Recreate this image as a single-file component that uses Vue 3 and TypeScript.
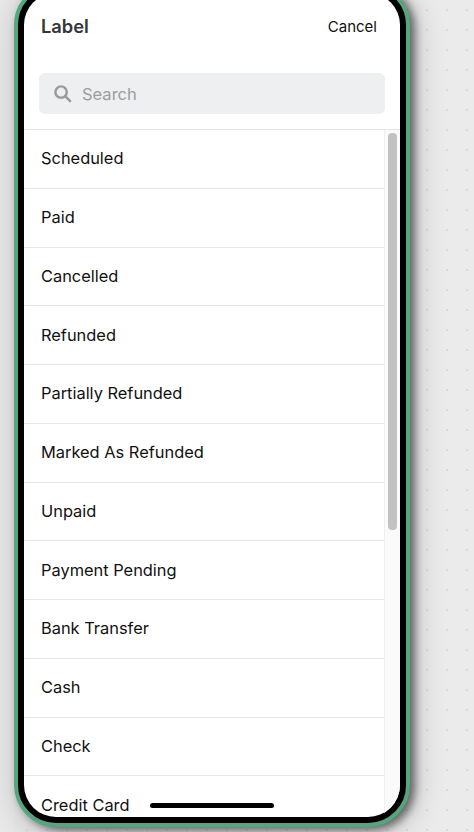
<script setup lang="ts">
const items: string[] = [
  'Scheduled', 'Paid', 'Cancelled', 'Refunded', 'Partially Refunded', 'Marked As Refunded',
  'Unpaid', 'Payment Pending', 'Bank Transfer', 'Cash', 'Check', 'Credit Card',
]
</script>

<template>
  <div class="stage">
    <div class="phone">
      <div class="screen">
        <header class="head">
          <span class="title">Label</span>
          <span class="cancel">Cancel</span>
        </header>
        <div class="search">
          <svg class="glass" viewBox="0 0 20 20" width="19" height="19" fill="none" stroke="#9a9b9e" stroke-width="2.6" stroke-linecap="round">
            <circle cx="8.5" cy="8.5" r="6" />
            <path d="M13 13l5 5" />
          </svg>
          <span class="placeholder">Search</span>
        </div>
        <div class="body">
          <ul class="list">
            <li v-for="item in items" :key="item" class="row">{{ item }}</li>
          </ul>
          <div class="gutter">
            <div class="thumb"></div>
          </div>
        </div>
        <div class="home"></div>
      </div>
    </div>
  </div>
</template>

<style>
html, body { margin: 0; padding: 0; }
</style>

<style scoped>
.stage {
  width: 474px;
  height: 832px;
  overflow: hidden;
  font-family: Inter, "Liberation Sans", sans-serif;
  background-color: #e8e8e8;
  background-image:
    linear-gradient(90deg, #e8e8e8 0, #e8e8e8 14px, transparent 14px),
    radial-gradient(circle at center, #dadada 0, #dadada 1px, transparent 1.4px),
    linear-gradient(90deg, #e6e6e6 0%, #ebebeb 100%);
  background-size: 100% 100%, 20px 20px, 100% 100%;
  background-position: 0 0, -3px 0, 0 0;
}
.phone {
  box-sizing: border-box;
  width: 396px;
  height: 844px;
  margin: -17px 0 0 14px;
  border: 4px solid #55a57f;
  border-radius: 42px;
  background: #000;
  box-shadow: 5px 3px 8px rgba(0, 0, 0, 0.5), 4px 4px 30px rgba(0, 0, 0, 0.22);
}
.screen {
  position: relative;
  box-sizing: border-box;
  width: 376px;
  height: 824px;
  margin: 6px;
  border-radius: 32px;
  background: #fff;
  overflow: hidden;
  display: flex;
  flex-direction: column;
}
.head {
  display: flex;
  justify-content: space-between;
  align-items: center;
  height: 66px;
  padding: 0 23px 0 17px;
  flex: none;
}
.title {
  font-size: 18.3px;
  font-weight: 600;
  color: #33363b;
}
.cancel {
  font-size: 15px;
  color: #111;
}
.search {
  display: flex;
  align-items: center;
  gap: 10px;
  height: 41px;
  flex: none;
  margin: 14px 15px 15px;
  padding-left: 14px;
  border-radius: 6px;
  background: #eeeff1;
}
.placeholder {
  font-size: 16.5px;
  color: #9c9da0;
}
.body {
  display: flex;
  flex: 1;
  min-height: 0;
  border-top: 1px solid #e6e6e6;
}
.list {
  flex: 1;
  margin: 0;
  padding: 0;
  list-style: none;
  overflow: hidden;
}
.row {
  box-sizing: border-box;
  height: 58.75px;
  display: flex;
  align-items: center;
  padding: 0 0 1px 17px;
  font-size: 16.4px;
  color: #111;
  border-bottom: 1px solid #e6e6e6;
}
.gutter {
  box-sizing: border-box;
  width: 16px;
  flex: none;
  padding: 3px 3px 0 3px;
  background: #fafafa;
  border-left: 1px solid #efefef;
}
.thumb {
  height: 397px;
  border-radius: 4px;
  background: #c2c2c2;
}
.home {
  position: absolute;
  left: 126px;
  bottom: 9px;
  width: 124px;
  height: 5px;
  border-radius: 3px;
  background: #000;
}
</style>
